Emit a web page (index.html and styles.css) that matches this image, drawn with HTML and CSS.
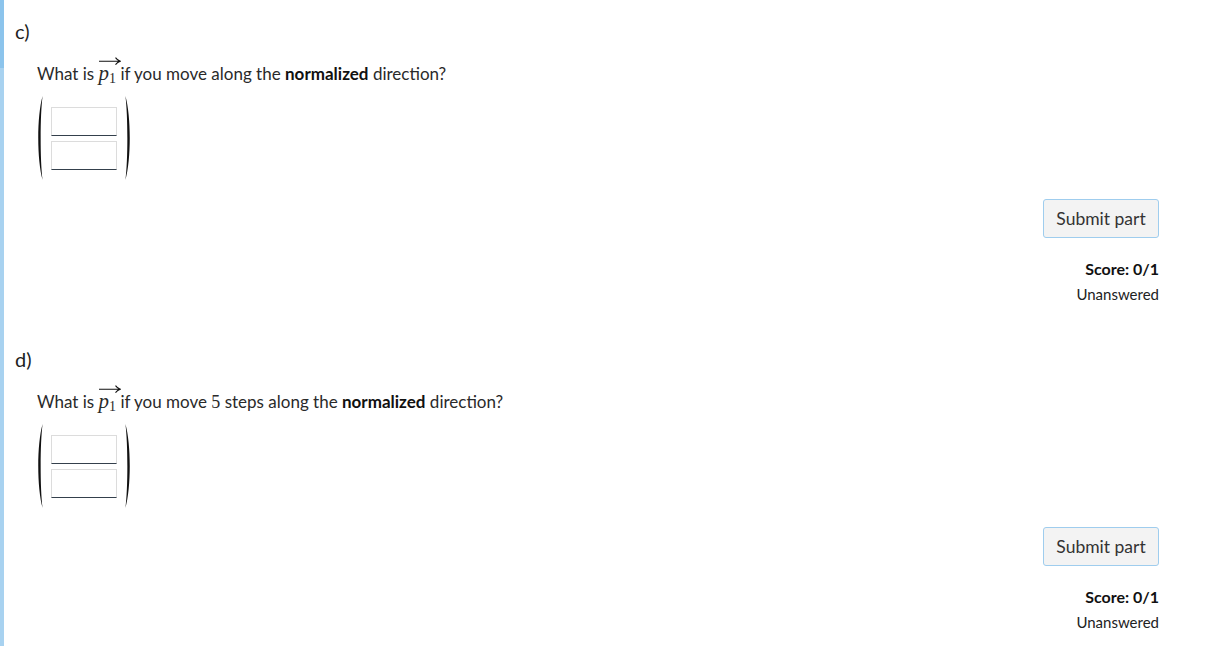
FILE: index.html
```html
<!DOCTYPE html>
<html lang="en">
<head>
    <meta charset="UTF-8">
    <title>Question parts</title>
    <link rel="stylesheet" href="styles.css">
</head>
<body>

<div class="question">

    <!-- Part c -->
    <section class="part">
        <h3 class="part-label">c)</h3>
        <div class="part-body">
            <p class="prompt">
                What is
                <span class="vec"><svg class="vec-arrow" viewBox="0 0 22 8"><path d="M0 4.2 H20.5 M16.5 0.6 Q18.5 3.4 21.3 4.2 Q18.5 5 16.5 7.6"/></svg><i>p</i><sub>1</sub></span>
                if you move along the <b>normalized</b> direction?
            </p>
            <div class="matrix">
                <svg class="paren" viewBox="0 0 6 84" preserveAspectRatio="none"><path d="M5.6 0 C-0.2 20 -0.2 64 5.6 84 C3 64 3 20 5.6 0 Z"/></svg>
                <div class="cells">
                    <input type="text" class="cell">
                    <input type="text" class="cell">
                </div>
                <svg class="paren" viewBox="0 0 6 84" preserveAspectRatio="none"><path d="M0.4 0 C6.2 20 6.2 64 0.4 84 C3 64 3 20 0.4 0 Z"/></svg>
            </div>
        </div>
        <div class="part-footer">
            <button class="submit-btn">Submit part</button>
            <div class="score">Score: 0/1</div>
            <div class="feedback">Unanswered</div>
        </div>
    </section>

    <!-- Part d -->
    <section class="part">
        <h3 class="part-label">d)</h3>
        <div class="part-body">
            <p class="prompt">
                What is
                <span class="vec"><svg class="vec-arrow" viewBox="0 0 22 8"><path d="M0 4.2 H20.5 M16.5 0.6 Q18.5 3.4 21.3 4.2 Q18.5 5 16.5 7.6"/></svg><i>p</i><sub>1</sub></span>
                if you move <span class="num">5</span> steps along the <b>normalized</b> direction?
            </p>
            <div class="matrix">
                <svg class="paren" viewBox="0 0 6 84" preserveAspectRatio="none"><path d="M5.6 0 C-0.2 20 -0.2 64 5.6 84 C3 64 3 20 5.6 0 Z"/></svg>
                <div class="cells">
                    <input type="text" class="cell">
                    <input type="text" class="cell">
                </div>
                <svg class="paren" viewBox="0 0 6 84" preserveAspectRatio="none"><path d="M0.4 0 C6.2 20 6.2 64 0.4 84 C3 64 3 20 0.4 0 Z"/></svg>
            </div>
        </div>
        <div class="part-footer">
            <button class="submit-btn">Submit part</button>
            <div class="score">Score: 0/1</div>
            <div class="feedback">Unanswered</div>
        </div>
    </section>

</div>

</body>
</html>
```

FILE: styles.css
```css
/* Page */
html {
    min-height: 100%;
    background:
        linear-gradient(#8cc4ec, #8cc4ec) 0 0 / 4px 68px no-repeat,
        linear-gradient(#a8d2f0, #a8d2f0) 0 0 / 4px 100% no-repeat,
        #fff;
}

body {
    margin: 0;
    font-family: Lato, "Open Sans", sans-serif;
    font-size: 17px;
    color: #2a2a2a;
}

.question {
    padding: 19px 71px 0 15px;
}

/* Parts */
.part {
    margin-bottom: 43px;
}

.part:last-child {
    margin-bottom: 0;
}

.part-label {
    margin: 0;
    font-size: 20px;
    line-height: 24px;
    font-weight: normal;
    color: #1e1e1e;
}

.part-body {
    padding-left: 22px;
}

.prompt {
    margin: 20px 0 0;
    height: 22px;
    line-height: 22px;
    color: #2a2a2a;
}

.prompt b {
    color: #111;
}

.num {
    font-family: "Liberation Serif", serif;
    font-size: 18px;
    line-height: 0;
}

/* Vector p1 */
.vec {
    position: relative;
    display: inline-block;
    font-family: "Liberation Serif", serif;
    font-size: 21px;
    line-height: 0;
}

.vec sub {
    font-style: normal;
    font-size: 14px;
    line-height: 0;
    vertical-align: -3px;
}

.vec-arrow {
    position: absolute;
    left: 0;
    top: -16px;
    width: 22px;
    height: 8px;
    fill: none;
    stroke: #111;
    stroke-width: 1.1;
}

/* Matrix input */
.matrix {
    display: flex;
    align-items: stretch;
    margin-top: 11px;
    height: 84px;
}

.paren {
    width: 6px;
    height: 84px;
    fill: #111;
}

.cells {
    display: flex;
    flex-direction: column;
    gap: 5px;
    padding: 11px 8px 0 8px;
}

.cell {
    width: 66px;
    height: 29px;
    box-sizing: border-box;
    margin: 0;
    border: 1px solid #dcdcdc;
    border-bottom: 1px solid #34404c;
    background: #fff;
}

/* Footer */
.part-footer {
    display: flex;
    flex-direction: column;
    align-items: flex-end;
}

.submit-btn {
    margin-top: 19px;
    height: 39px;
    width: 116px;
    padding: 0;
    font-family: Lato, "Open Sans", sans-serif;
    font-size: 17.5px;
    color: #333;
    background-color: #f3f3f3;
    border: 1px solid #9fcdee;
    border-radius: 3px;
}

.score {
    margin-top: 21px;
    font-size: 16px;
    font-weight: bold;
    line-height: 20px;
    color: #111;
}

.feedback {
    margin-top: 5px;
    font-size: 15px;
    line-height: 20px;
    color: #222;
}
```
